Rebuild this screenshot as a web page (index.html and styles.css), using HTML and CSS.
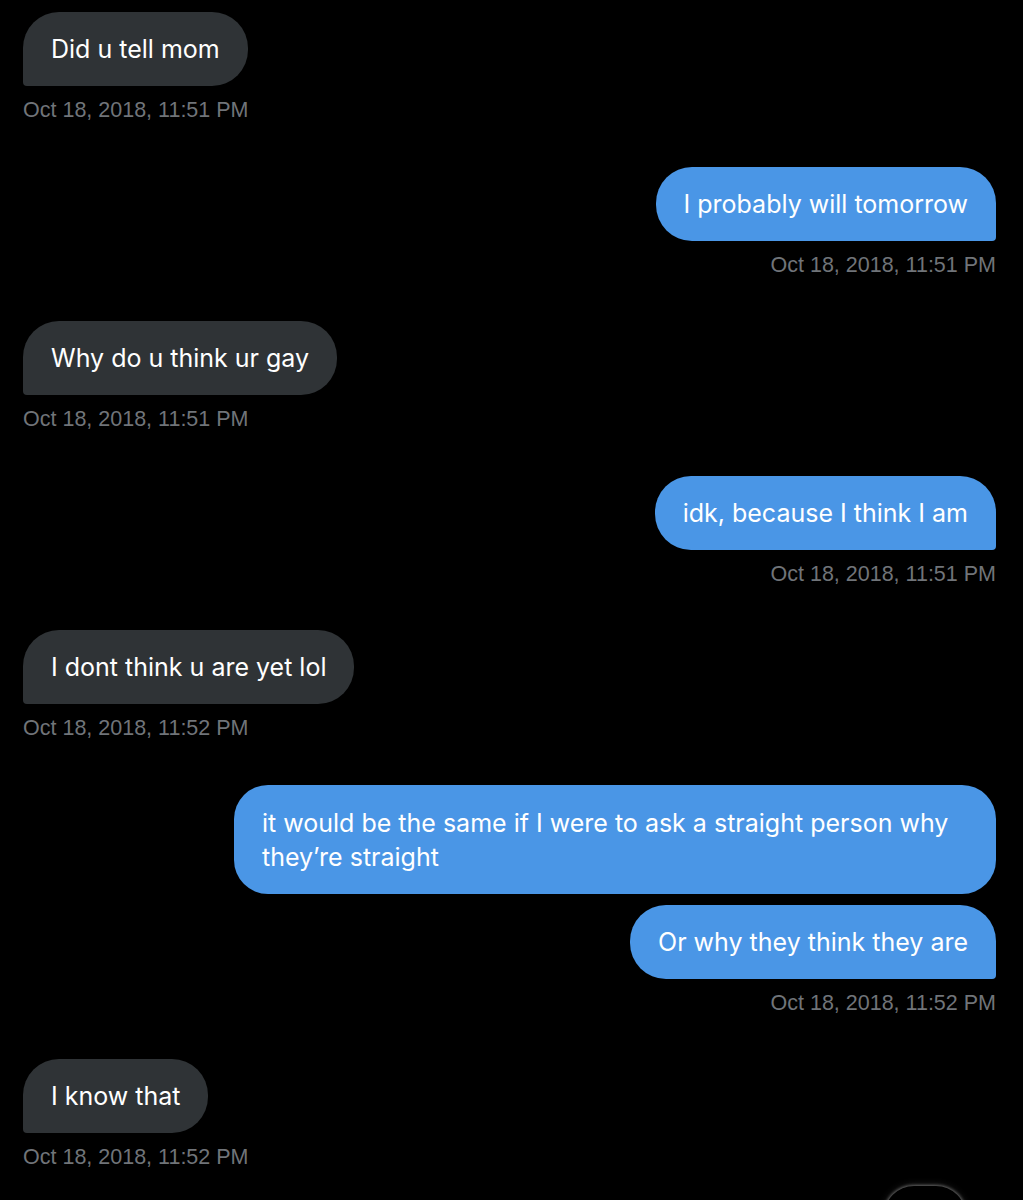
FILE: index.html
```html
<!DOCTYPE html>
<html lang="en">
<head>
<meta charset="utf-8">
<title>Messages</title>
<link rel="stylesheet" href="styles.css">
</head>
<body>
<main class="thread">
  <section class="group received">
    <div class="bubble">Did u tell mom</div>
    <div class="time">Oct 18, 2018, 11:51 PM</div>
  </section>
  <section class="group sent">
    <div class="bubble">I probably will tomorrow</div>
    <div class="time">Oct 18, 2018, 11:51 PM</div>
  </section>
  <section class="group received">
    <div class="bubble">Why do u think ur gay</div>
    <div class="time">Oct 18, 2018, 11:51 PM</div>
  </section>
  <section class="group sent">
    <div class="bubble">idk, because I think I am</div>
    <div class="time">Oct 18, 2018, 11:51 PM</div>
  </section>
  <section class="group received">
    <div class="bubble">I dont think u are yet lol</div>
    <div class="time">Oct 18, 2018, 11:52 PM</div>
  </section>
  <section class="group sent">
    <div class="bubble wide stacked">it would be the same if I were to ask a straight person why<br>they’re straight</div>
    <div class="bubble">Or why they think they are</div>
    <div class="time">Oct 18, 2018, 11:52 PM</div>
  </section>
  <section class="group received">
    <div class="bubble">I know that</div>
    <div class="time">Oct 18, 2018, 11:52 PM</div>
  </section>
</main>
<div class="scroll-btn"></div>
</body>
</html>
```
FILE: styles.css
```css
html, body {
  margin: 0;
  padding: 0;
  background: #000;
}
body {
  width: 1023px;
  height: 1200px;
  overflow: hidden;
  position: relative;
}
.thread {
  display: flex;
  flex-direction: column;
  gap: 44.5px;
  padding: 12px 27px 0 23px;
}
.group {
  display: flex;
  flex-direction: column;
  gap: 11px;
}
.group.received { align-items: flex-start; }
.group.sent { align-items: flex-end; }
.bubble {
  font-family: Inter, "Noto Sans", sans-serif;
  font-size: 25px;
  line-height: 34px;
  color: #fff;
  padding: 20px 28px;
  border-radius: 36px;
}
.received .bubble {
  background: #2f3336;
  border-bottom-left-radius: 4px;
}
.sent .bubble {
  background: #4a96e6;
  border-bottom-right-radius: 4px;
}
.sent .bubble.stacked {
  border-radius: 34px;
  padding: 21px 28px 20px;
}
.bubble.wide {
  width: 762px;
  box-sizing: border-box;
}
.time {
  font-family: "Liberation Sans", Arial, sans-serif;
  font-size: 21.5px;
  line-height: 24px;
  color: #707479;
  margin-top: 1px;
}
.scroll-btn {
  position: absolute;
  left: 884px;
  top: 1186px;
  width: 82px;
  height: 60px;
  border-radius: 30px;
  background: #000;
  box-shadow: 0 0 3px 1px rgba(160,160,160,0.55), 0 0 8px rgba(120,120,120,0.35);
}
```
